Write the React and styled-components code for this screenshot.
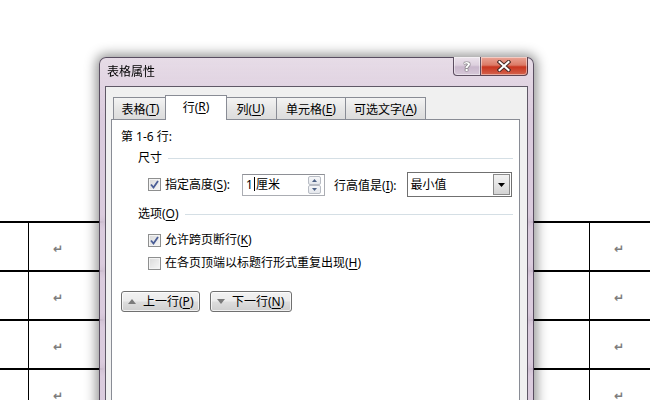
import React from "react";
import styled, { createGlobalStyle } from "styled-components";

const GlobalStyle = createGlobalStyle`
	* { box-sizing: border-box; }
	body {
		margin: 0;
		background: #ffffff;
		font-family: "Noto Sans", "Noto Sans CJK SC", sans-serif;
		font-size: 12px;
		color: #000;
	}
`;

const Page = styled.div`
	position: relative;
	width: 650px;
	height: 400px;
	overflow: hidden;
	background: #fff;
`;

// document table behind the dialog
const DocTable = styled.div`
	padding-top: 221px;
`;

const DocRow = styled.div`
	display: grid;
	grid-template-columns: 28px 280px 281px 61px;
	height: 49px;
	border-top: 2px solid #000;
`;

const DocCell = styled.div`
	border-left: ${(p) => (p.first ? "none" : "1px solid #000")};
	padding: 18px 0 0 24px;
	line-height: 16px;
`;

const Mark = styled.span`
	font-family: "DejaVu Sans", sans-serif;
	font-size: 12px;
	font-weight: bold;
	color: #7c7c7c;
`;

// dialog window
const Dialog = styled.div`
	position: absolute;
	left: 99px;
	top: 57px;
	width: 435px;
	height: 370px;
	display: flex;
	flex-direction: column;
	padding: 0 5px;
	border: 1px solid rgba(45, 35, 55, 0.75);
	border-radius: 7px 7px 0 0;
	background: linear-gradient(to bottom, rgba(228, 216, 228, 0.9), rgba(212, 194, 215, 0.85) 60px);
	backdrop-filter: blur(3px);
	box-shadow: 0 0 12px 3px rgba(0, 0, 0, 0.42);
`;

const TitleBar = styled.div`
	height: 28px;
	display: flex;
	justify-content: space-between;
	align-items: flex-start;
`;

const Title = styled.div`
	margin: 6px 0 0 2px;
	line-height: 16px;
	font-size: 12px;
	color: #000;
`;

const CaptionButtons = styled.div`
	display: flex;
	margin-top: -1px;
`;

const CaptionButton = styled.div`
	width: ${(p) => (p.close ? 47 : 28)}px;
	height: 19px;
	display: flex;
	align-items: center;
	justify-content: center;
	border: 1px solid rgba(60, 45, 65, 0.8);
	border-top: none;
	border-left: ${(p) => (p.close ? "none" : "1px solid rgba(60, 45, 65, 0.8)")};
	border-radius: ${(p) => (p.close ? "0 0 4px 0" : "0 0 0 4px")};
	box-shadow: inset 0 0 0 1px rgba(255, 255, 255, 0.45);
	background: ${(p) =>
		p.close
			? "linear-gradient(to bottom, #eaa597, #dc7a66 45%, #c8351f 55%, #d5644e)"
			: "linear-gradient(to bottom, #ece4ec, #ddd0de 45%, #c9b7cc 55%, #d6c8d8)"};
`;

const HelpGlyph = styled.span`
	font-family: "DejaVu Sans", sans-serif;
	font-weight: bold;
	font-size: 13px;
	line-height: 1;
	color: #fff;
	text-shadow: 0 0 1px #444, 0 0 1px #444, 0 0 1px #444;
`;

const Client = styled.div`
	flex: 1;
	display: flex;
	flex-direction: column;
	background: #f0f0f0;
	border: 1px solid #5f5866;
	border-bottom: none;
	padding: 8px 7px 0 5px;
`;

const TabStrip = styled.div`
	display: flex;
	align-items: flex-end;
	padding-left: 2px;
	height: 24px;
	position: relative;
	z-index: 1;
`;

const Tab = styled.div`
	width: ${(p) => p.w}px;
	height: ${(p) => (p.active ? 25 : 22)}px;
	margin: ${(p) => (p.active ? "0 -2px -1px -3px" : "0 0 0 -1px")};
	display: flex;
	align-items: center;
	justify-content: center;
	padding-bottom: ${(p) => (p.active ? 3 : 0)}px;
	border: 1px solid #898c95;
	border-bottom: none;
	background: ${(p) => (p.active ? "#fff" : "linear-gradient(to bottom, #f4f4f4, #e6e6e6 50%, #dcdcdc)")};
	position: relative;
	z-index: ${(p) => (p.active ? 2 : 1)};
	white-space: nowrap;
	&:first-child {
		margin-left: 0;
	}
`;

const Key = styled.span`
	text-decoration: underline;
	text-underline-offset: 2px;
`;

const Panel = styled.div`
	flex: 1;
	background: #fff;
	border: 1px solid #898c95;
	border-bottom: none;
	padding: 9px 6px 0 9px;
	display: flex;
	flex-direction: column;
`;

const RangeLabel = styled.div`
	line-height: 16px;
`;

const GroupHeader = styled.div`
	display: flex;
	align-items: center;
	gap: 6px;
	margin-top: ${(p) => p.gap}px;
	padding-left: 17px;
	line-height: 16px;
	&::after {
		content: "";
		flex: 1;
		height: 1px;
		background: #d5dfe5;
	}
`;

const FieldRow = styled.div`
	display: flex;
	align-items: center;
	height: 25px;
	margin-top: 6px;
	padding-left: 27px;
`;

const CheckRow = styled.label`
	display: flex;
	align-items: center;
	gap: 4px;
	line-height: 16px;
	margin-top: ${(p) => p.gap}px;
	padding-left: ${(p) => (p.inline ? 0 : 27)}px;
`;

const Box = styled.span`
	width: 13px;
	height: 13px;
	border: 1px solid #8e8f8f;
	background: linear-gradient(135deg, #d9d9d9, #f7f7f7);
	box-shadow: inset 0 0 0 1px #f4f4f4;
	display: flex;
	align-items: center;
	justify-content: center;
`;

const FieldLabel = styled.span`
	margin-left: ${(p) => p.gap}px;
	white-space: nowrap;
`;

const SpinBox = styled.div`
	width: 83px;
	height: 22px;
	margin-left: 12px;
	display: flex;
	align-items: center;
	border: 1px solid #abadb3;
	border-top-color: #8e9096;
	background: #fff;
	padding-left: 3px;
`;

const SpinText = styled.span`
	flex: 1;
	line-height: 16px;
`;

const Caret = styled.span`
	display: inline-block;
	width: 1px;
	height: 14px;
	background: #000;
	vertical-align: -2px;
	margin: 0 1px 0 1px;
`;

const Spinner = styled.div`
	display: flex;
	flex-direction: column;
	margin-right: 3px;
`;

const SpinButton = styled.div`
	width: 13px;
	height: 9px;
	display: flex;
	align-items: center;
	justify-content: center;
	border: 1px solid #b8bcc4;
	border-radius: 2px;
	background: linear-gradient(to bottom, #f6f7f9, #e4e7ec);
`;

const Select = styled.div`
	width: 105px;
	height: 25px;
	margin-left: 10px;
	display: flex;
	align-items: center;
	border: 1px solid #707070;
	background: #fff;
	padding-left: 3px;
`;

const SelectText = styled.span`
	flex: 1;
	line-height: 16px;
`;

const DropButton = styled.div`
	width: 17px;
	height: 21px;
	margin-right: 1px;
	display: flex;
	align-items: center;
	justify-content: center;
	border: 1px solid #8a8a8a;
	background: linear-gradient(to bottom, #f2f2f2, #e4e4e4 50%, #d4d4d4);
`;

const ButtonRow = styled.div`
	display: flex;
	gap: 10px;
	margin-top: 20px;
`;

const NavButton = styled.div`
	width: ${(p) => p.w}px;
	height: 21px;
	display: flex;
	align-items: center;
	gap: 7px;
	padding-left: 6px;
	border: 1px solid #707070;
	border-radius: 3px;
	background: linear-gradient(to bottom, #f2f2f2, #ebebeb 48%, #dddddd 52%, #cfcfcf);
	box-shadow: inset 0 0 0 1px rgba(255, 255, 255, 0.7);
	line-height: 16px;
`;

const Check = ({ on }) => (
	<Box>
		{on && (
			<svg width="9" height="9" viewBox="0 0 9 9">
				<path d="M1 4.5 L3.5 7.5 L8 1" fill="none" stroke="#4a5d96" strokeWidth="1.8" />
			</svg>
		)}
	</Box>
);

const Tri = ({ up, color = "#000", w = 7, h = 4 }) => (
	<svg width={w} height={h} viewBox={`0 0 ${w} ${h}`}>
		<path d={up ? `M0 ${h} L${w / 2} 0 L${w} ${h} Z` : `M0 0 L${w} 0 L${w / 2} ${h} Z`} fill={color} />
	</svg>
);

const rows = [0, 1, 2, 3];

const tabs = [
	{ label: "表格", key: "T", w: 55 },
	{ label: "行", key: "R", w: 62, active: true },
	{ label: "列", key: "U", w: 53 },
	{ label: "单元格", key: "E", w: 70 },
	{ label: "可选文字", key: "A", w: 81 },
];

export default function App() {
	return (
		<Page>
			<GlobalStyle />
			<DocTable>
				{rows.map((r) => (
					<DocRow key={r}>
						<DocCell first />
						<DocCell>
							<Mark>↵</Mark>
						</DocCell>
						<DocCell />
						<DocCell>
							<Mark>↵</Mark>
						</DocCell>
					</DocRow>
				))}
			</DocTable>

			<Dialog>
				<TitleBar>
					<Title>表格属性</Title>
					<CaptionButtons>
						<CaptionButton>
							<HelpGlyph>?</HelpGlyph>
						</CaptionButton>
						<CaptionButton close>
							<svg width="14" height="12" viewBox="0 0 14 12">
								<path d="M2.5 2 L11.5 10 M11.5 2 L2.5 10" stroke="#4a2a26" strokeWidth="4" strokeLinecap="square" />
								<path d="M2.5 2 L11.5 10 M11.5 2 L2.5 10" stroke="#fff" strokeWidth="2" strokeLinecap="square" />
							</svg>
						</CaptionButton>
					</CaptionButtons>
				</TitleBar>

				<Client>
					<TabStrip>
						{tabs.map((t) => (
							<Tab key={t.key} w={t.w} active={t.active}>
								{t.label}(<Key>{t.key}</Key>)
							</Tab>
						))}
					</TabStrip>
					<Panel>
						<RangeLabel>第 1-6 行:</RangeLabel>
						<GroupHeader gap={5}>尺寸</GroupHeader>
						<FieldRow>
							<CheckRow inline>
								<Check on />
								<FieldLabel gap={0}>
									指定高度(<Key>S</Key>):
								</FieldLabel>
							</CheckRow>
							<SpinBox>
								<SpinText>
									1<Caret />厘米
								</SpinText>
								<Spinner>
									<SpinButton>
										<Tri up color="#4d6185" w={5} h={3} />
									</SpinButton>
									<SpinButton>
										<Tri color="#4d6185" w={5} h={3} />
									</SpinButton>
								</Spinner>
							</SpinBox>
							<FieldLabel gap={9}>
								行高值是(<Key>I</Key>):
							</FieldLabel>
							<Select>
								<SelectText>最小值</SelectText>
								<DropButton>
									<Tri />
								</DropButton>
							</Select>
						</FieldRow>
						<GroupHeader gap={9}>
							<span>
								选项(<Key>O</Key>)
							</span>
						</GroupHeader>
						<CheckRow gap={10}>
							<Check on />
							<span>
								允许跨页断行(<Key>K</Key>)
							</span>
						</CheckRow>
						<CheckRow gap={7}>
							<Check />
							<span>
								在各页顶端以标题行形式重复出现(<Key>H</Key>)
							</span>
						</CheckRow>
						<ButtonRow>
							<NavButton w={79}>
								<Tri up color="#7a7a7a" w={8} h={5} />
								<span>
									上一行(<Key>P</Key>)
								</span>
							</NavButton>
							<NavButton w={82}>
								<Tri color="#7a7a7a" w={8} h={5} />
								<span>
									下一行(<Key>N</Key>)
								</span>
							</NavButton>
						</ButtonRow>
					</Panel>
				</Client>
			</Dialog>
		</Page>
	);
}
